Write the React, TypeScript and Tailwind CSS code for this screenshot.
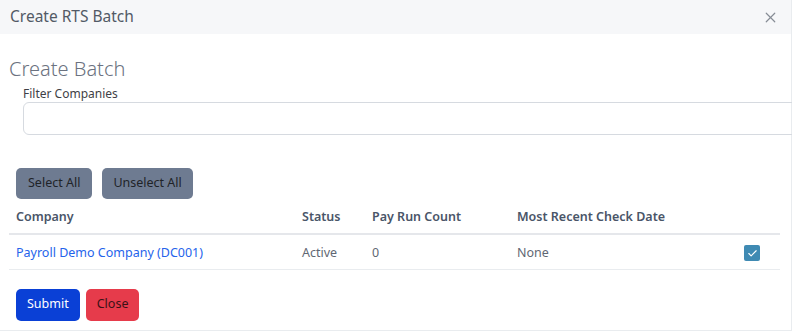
import { Check, X } from "lucide-react";

const font = { fontFamily: '"Noto Sans", "Open Sans", Arial, sans-serif' };

export default function App() {
  return (
    <div className="w-[792px] h-[331px] bg-white overflow-hidden" style={font}>
      <div className="h-full border-r border-b border-[#e9ecef] flex flex-col">
        {/* header */}
        <div className="h-[34px] bg-[#f6f7f9] flex items-center justify-between pl-[10px] pr-[12px] shrink-0">
          <div className="text-[15.5px] text-[#525a66]">Create RTS Batch</div>
          <X size={17} strokeWidth={1.7} className="text-[#868c95]" />
        </div>

        <div className="pl-[9px] pt-[21px]">
          <h2 className="text-[20px] font-light text-[#6b7280] leading-[27px]">Create Batch</h2>

          <div className="pl-[14px] mt-[4px]">
            <label className="block text-[12px] text-[#3f3f46] leading-[16px]">Filter Companies</label>
            <input className="w-[790px] h-[33px] border border-[#d6dae0] rounded-[6px] outline-none" />
          </div>

          <div className="flex gap-[10px] pl-[7px] mt-[33px]">
            <button className="h-[31px] px-[12px] bg-[#6e7b91] rounded-[5px] text-[12.5px] text-[#1f2328]">Select All</button>
            <button className="h-[31px] px-[11px] bg-[#6e7b91] rounded-[5px] text-[12.5px] text-[#1f2328]">Unselect All</button>
          </div>

          <table className="w-[771px] mt-[6px] border-collapse text-[12.5px]">
            <thead>
              <tr className="border-b-2 border-[#e5e7eb] text-left text-[#4a5568]">
                <th className="h-[29px] px-[7px] pb-[4px] font-semibold w-[286px]">Company</th>
                <th className="px-[7px] pb-[4px] font-semibold w-[70px]">Status</th>
                <th className="px-[7px] pb-[4px] font-semibold w-[145px]">Pay Run Count</th>
                <th className="px-[7px] pb-[4px] font-semibold">Most Recent Check Date</th>
                <th className="w-[50px]"></th>
              </tr>
            </thead>
            <tbody>
              <tr className="border-b border-[#e9ecef] text-[#5f6773]">
                <td className="h-[35px] px-[7px] pt-[3px] text-[#2563eb]">Payroll Demo Company (DC001)</td>
                <td className="px-[7px] pt-[3px]">Active</td>
                <td className="px-[7px] pt-[3px]">0</td>
                <td className="px-[7px] pt-[3px]">None</td>
                <td className="pt-[3px]">
                  <div className="w-[16px] h-[16px] bg-[#3f8ab3] rounded-[2px] flex items-center justify-center ml-[14px]">
                    <Check size={11} strokeWidth={2.5} className="text-white" />
                  </div>
                </td>
              </tr>
            </tbody>
          </table>

          <div className="flex gap-[6px] pl-[7px] mt-[19px]">
            <button className="h-[32px] px-[11px] bg-[#0a40d6] rounded-[5px] text-[12.5px] text-white">Submit</button>
            <button className="h-[32px] px-[11px] bg-[#e63b4b] rounded-[5px] text-[12.5px] text-[#3a1116]">Close</button>
          </div>
        </div>
      </div>
    </div>
  );
}
